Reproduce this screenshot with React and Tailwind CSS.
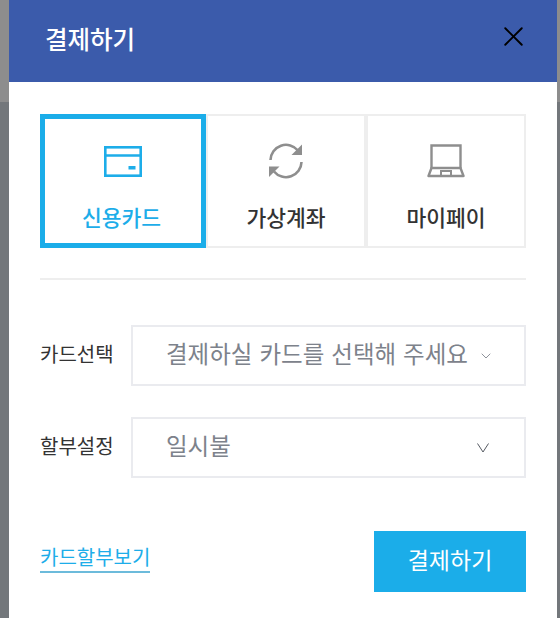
import { X, ChevronDown } from "lucide-react";

const font = { fontFamily: '"Noto Sans CJK KR", "Noto Sans", sans-serif' };

function CardIcon() {
  return (
    <svg width="38" height="31" viewBox="0 0 38 31" fill="none" className="text-[#1dade9]">
      <rect x="1.300" y="1.300" width="35.400" height="28.400" stroke="currentColor" strokeWidth="2.6" />
      <path d="M1 9.500h36" stroke="currentColor" strokeWidth="2.6" />
      <rect x="24.500" y="20" width="7" height="3.500" fill="currentColor" />
    </svg>
  );
}

function SyncIcon() {
  return (
    <svg width="38" height="38" viewBox="0 0 38 38" fill="none" stroke="#8e8e8e" strokeWidth="2.6">
      <path d="M31 8.500A15.500 15.500 0 0 0 3.500 18" />
      <path d="M7 29.500A15.500 15.500 0 0 0 34.500 20" />
      <path d="M35 2.500V13H24.500z" fill="#8e8e8e" stroke="none" />
      <path d="M2 35V24.500h10.500z" fill="#8e8e8e" stroke="none" />
    </svg>
  );
}

function LaptopIcon() {
  return (
    <svg width="38" height="34" viewBox="0 0 38 34" fill="none" stroke="#8e8e8e" strokeWidth="2.400">
      <path d="M4.500 24V1.500h29V24" />
      <path d="M4.500 24h29l3 8H1.500z" strokeLinejoin="round" />
      <path d="M14 31v-4h10v4" strokeWidth="2" />
    </svg>
  );
}

function Tab({ icon, label, active }) {
  return (
    <div
      className={
        active
          ? "flex flex-1 flex-col items-center border-[5px] border-[#1bade9] pt-[23px]"
          : "flex flex-1 flex-col items-center border-2 border-[#eeeeee] pt-[26px]"
      }
    >
      <div className="flex h-[38px] items-center justify-center">{icon}</div>
      <div
        className={
          active
            ? "mt-[23px] mr-[3px] text-[21.500px] font-medium leading-7 text-[#1dade9]"
            : "mt-[23px] text-[21.500px] font-medium leading-7 text-[#333333]"
        }
      >
        {label}
      </div>
    </div>
  );
}

function SelectRow({ label, value, smallChevron }) {
  return (
    <div className="flex items-center">
      <div className="w-[91px] pb-1 text-[20px] leading-7 text-[#333333]">{label}</div>
      <div className="flex h-[61px] flex-1 items-center justify-between border-2 border-[#eaebef] pl-[33px]">
        <span className="pb-1 text-[23.500px] text-[#7d828b] [word-spacing:1.7px]">{value}</span>
        {smallChevron ? (
          <ChevronDown size={16} strokeWidth={1.3} className="mr-[30px] text-[#7d828b]" />
        ) : (
          <svg width="12" height="10" viewBox="0 0 12 10" fill="none" stroke="#555a62" strokeWidth="1" className="mr-[35px]">
            <path d="M.5.5 6 9 11.500.5" />
          </svg>
        )}
      </div>
    </div>
  );
}

export default function App() {
  return (
    <div
      style={font}
      className="h-[618px] w-[560px] overflow-hidden bg-[linear-gradient(#8d8d8d_0,#8d8d8d_102px,#73777b_102px)] pl-[9px] pr-[3px]"
    >
      <div className="h-full bg-white">
        <div className="flex h-[82px] items-center justify-between bg-[#3b5bab] pl-[37px] pr-[26px]">
          <h1 className="ml-[-1px] pb-1 text-[24.500px] font-medium leading-none text-white">결제하기</h1>
          <X size={33} strokeWidth={1.4} className="mb-[10px] mr-[1px] text-black" />
        </div>
        <div className="pl-[31px] pr-[31px] pt-[32px]">
          <div className="flex h-[134px]">
            <div className="w-[166px] shrink-0 flex">
              <Tab active icon={<CardIcon />} label="신용카드" />
            </div>
            <div className="w-[160px] shrink-0 flex">
              <Tab icon={<SyncIcon />} label="가상계좌" />
            </div>
            <div className="w-[160px] shrink-0 flex">
              <Tab icon={<LaptopIcon />} label="마이페이" />
            </div>
          </div>
          <div className="mt-[30px] h-[2px] bg-[#eeeeee]" />
          <div className="mt-[45px] flex flex-col gap-[31px]">
            <SelectRow label="카드선택" value="결제하실 카드를 선택해 주세요" smallChevron />
            <SelectRow label="할부설정" value="일시불" />
          </div>
          <div className="mt-[53px] flex items-center justify-between">
            <a className="mb-[8px] border-b-2 border-[#6cbbdb] text-[20px] leading-[28px] text-[#1dade9]">카드할부보기</a>
            <button className="flex h-[61px] w-[152px] items-center justify-center bg-[#1bade9] pb-1 text-[23px] text-white">
              결제하기
            </button>
          </div>
        </div>
      </div>
    </div>
  );
}
